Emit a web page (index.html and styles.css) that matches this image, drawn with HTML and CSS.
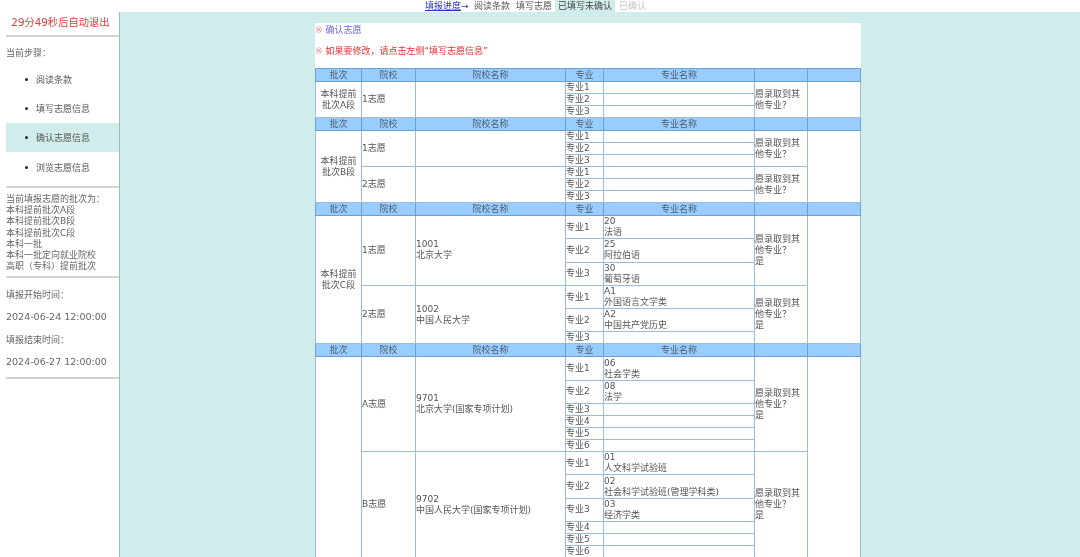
FILE: index.html
```html
<!DOCTYPE html>
<html lang="zh-CN">
<head>
<meta charset="utf-8">
<title>确认志愿</title>
<link rel="stylesheet" href="styles.css">
</head>
<body>
<div class="steps">
  <span class="step-lead"><a class="step-link">填报进度</a>→</span>
  <span class="step">阅读条款</span>
  <span class="step">填写志愿</span>
  <span class="step step-current">已填写未确认</span>
  <span class="step step-todo">已确认</span>
</div>
<div class="layout">
  <aside class="side">
    <div class="countdown">29分49秒后自动退出</div>
    <div class="side-label">当前步骤：</div>
    <ul class="menu">
      <li>阅读条款</li>
      <li>填写志愿信息</li>
      <li class="active">确认志愿信息</li>
      <li>浏览志愿信息</li>
    </ul>
    <div class="batches">当前填报志愿的批次为：<br>本科提前批次A段<br>本科提前批次B段<br>本科提前批次C段<br>本科一批<br>本科一批定向就业院校<br>高职（专科）提前批次</div>
    <div class="times">
      <p>填报开始时间：</p>
      <p class="stamp">2024-06-24 12:00:00</p>
      <p>填报结束时间：</p>
      <p class="stamp">2024-06-27 12:00:00</p>
    </div>
  </aside>
  <main class="main">
    <div class="panel">
      <p class="note note-blue"><span class="mark">※</span> 确认志愿</p>
      <p class="note note-red"><span class="mark">※</span> 如果要修改，请点击左侧“填写志愿信息”</p>
      <table class="grid">
        <colgroup><col class="c1"><col class="c2"><col class="c3"><col class="c4"><col class="c5"><col class="c6"><col class="c7"></colgroup>
        <tr class="head"><th>批次</th><th>院校</th><th>院校名称</th><th>专业</th><th>专业名称</th><th></th><th></th></tr>
        <tr class="r12"><td rowspan="3" class="mid">本科提前<br>批次A段</td><td rowspan="3">1志愿</td><td rowspan="3"></td><td>专业1</td><td></td><td rowspan="3">愿录取到其他专业？</td><td rowspan="3"></td></tr>
        <tr class="r12"><td>专业2</td><td></td></tr>
        <tr class="r12"><td>专业3</td><td></td></tr>

        <tr class="head"><th>批次</th><th>院校</th><th>院校名称</th><th>专业</th><th>专业名称</th><th></th><th></th></tr>
        <tr class="r12"><td rowspan="6" class="mid">本科提前<br>批次B段</td><td rowspan="3">1志愿</td><td rowspan="3"></td><td>专业1</td><td></td><td rowspan="3">愿录取到其他专业？</td><td rowspan="6"></td></tr>
        <tr class="r12"><td>专业2</td><td></td></tr>
        <tr class="r12"><td>专业3</td><td></td></tr>
        <tr class="r12"><td rowspan="3">2志愿</td><td rowspan="3"></td><td>专业1</td><td></td><td rowspan="3">愿录取到其他专业？</td></tr>
        <tr class="r12"><td>专业2</td><td></td></tr>
        <tr class="r12"><td>专业3</td><td></td></tr>

        <tr class="head"><th>批次</th><th>院校</th><th>院校名称</th><th>专业</th><th>专业名称</th><th></th><th></th></tr>
        <tr class="r23"><td rowspan="6" class="mid">本科提前<br>批次C段</td><td rowspan="3">1志愿</td><td rowspan="3">1001<br>北京大学</td><td>专业1</td><td>20<br>法语</td><td rowspan="3">愿录取到其他专业？<br>是</td><td rowspan="6"></td></tr>
        <tr class="r23"><td>专业2</td><td>25<br>阿拉伯语</td></tr>
        <tr class="r23"><td>专业3</td><td>30<br>葡萄牙语</td></tr>
        <tr class="r23"><td rowspan="3">2志愿</td><td rowspan="3">1002<br>中国人民大学</td><td>专业1</td><td>A1<br>外国语言文学类</td><td rowspan="3">愿录取到其他专业？<br>是</td></tr>
        <tr class="r23"><td>专业2</td><td>A2<br>中国共产党历史</td></tr>
        <tr class="r12"><td>专业3</td><td></td></tr>

        <tr class="head"><th>批次</th><th>院校</th><th>院校名称</th><th>专业</th><th>专业名称</th><th></th><th></th></tr>
        <tr class="r23"><td rowspan="12"></td><td rowspan="6">A志愿</td><td rowspan="6">9701<br>北京大学(国家专项计划)</td><td>专业1</td><td>06<br>社会学类</td><td rowspan="6">愿录取到其他专业？<br>是</td><td rowspan="12"></td></tr>
        <tr class="r23"><td>专业2</td><td>08<br>法学</td></tr>
        <tr class="r12"><td>专业3</td><td></td></tr>
        <tr class="r12"><td>专业4</td><td></td></tr>
        <tr class="r12"><td>专业5</td><td></td></tr>
        <tr class="r12"><td>专业6</td><td></td></tr>
        <tr class="r23"><td rowspan="6">B志愿</td><td rowspan="6">9702<br>中国人民大学(国家专项计划)</td><td>专业1</td><td>01<br>人文科学试验班</td><td rowspan="6">愿录取到其他专业？<br>是</td></tr>
        <tr class="r23"><td>专业2</td><td>02<br>社会科学试验班(管理学科类)</td></tr>
        <tr class="r23"><td>专业3</td><td>03<br>经济学类</td></tr>
        <tr class="r12"><td>专业4</td><td></td></tr>
        <tr class="r12"><td>专业5</td><td></td></tr>
        <tr class="r12"><td>专业6</td><td></td></tr>
      </table>
    </div>
  </main>
</div>
</body>
</html>
```

FILE: styles.css
```css
html, body {
  margin: 0;
  height: 557px;
  overflow: hidden;
  background: #fff;
}
body {
  font-family: "DejaVu Sans", "Noto Sans CJK TC", sans-serif;
  font-size: 9px;
  color: #555;
}
p { margin: 0; }

.steps, .layout { filter: blur(0.35px); }

.steps {
  height: 12px;
  display: flex;
  padding-left: 425px;
  line-height: 12px;
  color: #555;
}
.step-lead { color: #2f36b8; width: 49px; }
.step-link { text-decoration: underline; }
.step { width: 42px; }
.step-current { width: 60px; margin-left: -3px; padding-left: 3px; box-sizing: border-box; background: #d0edeb; line-height: 13px; color: #444; }
.step-todo { color: #c4c4c4; margin-left: 4px; }

.layout { display: flex; height: 545px; }

.side { width: 113px; margin-left: 6px; flex: none; }
.countdown {
  height: 23px;
  padding-right: 4px;
  line-height: 20px;
  font-size: 10.3px;
  color: #e8383c;
  text-align: center;
  border-bottom: 2px solid #d2d2d2;
}
.side-label { height: 27.5px; line-height: 32px; color: #666; }
.menu {
  list-style: none;
  margin: 0;
  padding: 0 0 4.4px;
  border-bottom: 2px solid #d2d2d2;
  color: #555;
}
.menu li {
  display: flex;
  align-items: center;
  box-sizing: border-box;
  height: 29.3px;
  padding-left: 18.5px;
}
.menu li::before {
  content: "";
  width: 3px;
  height: 3px;
  margin-right: 8.5px;
  border-radius: 50%;
  background: #222;
}
.menu .active { background: #d0edeb; }
.batches {
  padding: 6px 0 3.6px;
  line-height: 11.2px;
  color: #666;
  border-bottom: 2px solid #d2d2d2;
}
.times { padding: 5.5px 0 3.5px; border-bottom: 2px solid #d2d2d2; color: #666; }
.times p { height: 22.5px; line-height: 22.5px; }
.times .stamp { font-size: 9.5px; }

.main {
  flex: 1;
  background: #d0edeb;
  border-left: 1px solid #9fb9bd;
  padding: 11px 0 0 195px;
}
.panel { width: 546px; background: #fff; }
.note { line-height: 11px; }
.note-blue { color: #6a66d8; padding-top: 2px; height: 21px; }
.note-red { color: #ef2b30; height: 22px; }
.mark { color: #f08a8a; }

.grid {
  width: 546px;
  table-layout: fixed;
  border-collapse: collapse;
  border: 1px solid #9dbcdc;
}
.c1 { width: 46px; }
.c2 { width: 54px; }
.c3 { width: 150px; }
.c4 { width: 38px; }
.c5 { width: 151px; }
.c6 { width: 53px; }
.grid th, .grid td {
  box-sizing: border-box;
  border: 1px solid #9dbcdc;
  padding: 0;
  font-weight: normal;
  line-height: 11px;
  vertical-align: middle;
  text-align: left;
  overflow: hidden;
}
.grid th { background: #99ccff; text-align: center; color: #4f6070; border-color: #6f9fd0; }
.grid .mid { text-align: center; }
.head th { height: 13px; }
.r12 td { height: 12px; }
.r23 td { height: 23.3px; }
```
